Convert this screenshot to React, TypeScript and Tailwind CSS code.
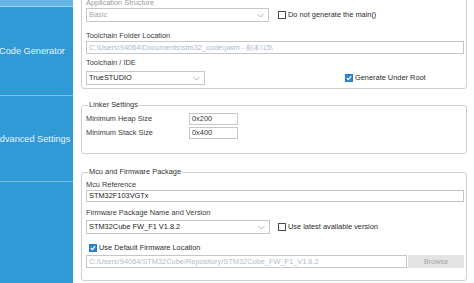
import React from "react";

const Chevron = () => (
  <svg width="7" height="5" viewBox="0 0 7 5" className="shrink-0">
    <polyline points="0.5,1 3.5,4 6.5,1" fill="none" stroke="#a8a8a8" strokeWidth="0.9" />
  </svg>
);

const Box = ({ checked }: { checked?: boolean }) =>
  checked ? (
    <div className="w-[8px] h-[8px] bg-[#2f86d4] border border-[#2a78c0] flex items-center justify-center shrink-0">
      <svg width="6" height="6" viewBox="0 0 6 6">
        <polyline points="0.8,3 2.4,4.6 5.2,1.2" fill="none" stroke="#ffffff" strokeWidth="1.1" />
      </svg>
    </div>
  ) : (
    <div className="w-[8px] h-[8px] bg-white border border-[#4a4a4a] shrink-0" />
  );

const Select = ({ text, w, light }: { text: string; w: string; light?: boolean }) => (
  <div className={`${w} h-[14px] border border-[#c6c6c6] bg-white flex items-center justify-between pl-[2px] pr-[4px]`}>
    <span className={light ? "text-[#a6a6a6]" : "text-[#222]"}>{text}</span>
    <Chevron />
  </div>
);

export default function App() {
  return (
    <div className="w-[474px] h-[283px] overflow-hidden bg-white flex font-['Liberation_Sans',Arial,sans-serif] text-[7.4px] leading-[10px] text-[#3a3a3a]">
      {/* sidebar */}
      <div className="w-[73px] shrink-0 bg-[#2f9ad6] flex flex-col overflow-hidden text-white text-[9.2px]">
        <div className="h-[6px] bg-[#64b5e4]" />
        <div className="h-[1px] bg-[#9fd0ee]" />
        <div className="h-[88px] flex items-center overflow-hidden">
          <div className="w-[84px] ml-[-10px] shrink-0 text-center text-[#e8f4fc] whitespace-nowrap">Code Generator</div>
        </div>
        <div className="h-[1px] bg-[#7cc0e8]" />
        <div className="h-[85px] flex items-center overflow-hidden">
          <div className="w-[84px] ml-[-10px] shrink-0 text-center text-[#e8f4fc] whitespace-nowrap">Advanced Settings</div>
        </div>
        <div className="h-[1px] bg-[#7cc0e8]" />
        <div className="flex-1" />
      </div>

      {/* main */}
      <div className="flex-1 flex flex-col pl-[8px] pr-[8px]">
        {/* Project settings group (cut at top) */}
        <div className="mt-[-12px] h-[101px] border border-[#cfcfcf] rounded-[3px] pl-[4px] pr-[2px] flex flex-col">
          <div className="mt-[9px] h-[10px] text-[#9a9a9a]">Application Structure</div>
          <div className="h-[14px] flex items-center">
            <Select text="Basic" w="w-[183px]" light />
            <div className="ml-[9px] flex items-center gap-[2px]">
              <Box />
              <span className="text-[#2a2a2a]">Do not generate the main()</span>
            </div>
          </div>
          <div className="mt-[9px] h-[10px]">Toolchain Folder Location</div>
          <div className="h-[13px] border border-[#c6c6c6] flex items-center pl-[2px] text-[#a9b8cf] whitespace-nowrap overflow-hidden">
            C:\Users\94064\Documents\stm32_code\pwm - 副本\15\
          </div>
          <div className="mt-[4px] h-[10px]">Toolchain / IDE</div>
          <div className="mt-[3px] h-[14px] flex items-center">
            <Select text="TrueSTUDIO" w="w-[119px]" />
            <div className="ml-[140px] flex items-center gap-[2px]">
              <Box checked />
              <span className="text-[#2a2a2a]">Generate Under Root</span>
            </div>
          </div>
        </div>

        {/* Linker Settings */}
        <fieldset className="mt-[11px] h-[54px] border border-[#cfcfcf] rounded-[3px] pl-[4px] pr-[2px]">
          <legend className="ml-[2px] px-[1px] h-[10px] leading-[10px] text-[#333]">Linker Settings</legend>
          <div className="mt-[3px] flex flex-col gap-[2px]">
            <div className="h-[12px] flex items-center">
              <span className="w-[103px]">Minimum Heap Size</span>
              <div className="w-[49px] h-[12px] border border-[#c6c6c6] pl-[2px] flex items-center text-[#333]">0x200</div>
            </div>
            <div className="h-[12px] flex items-center">
              <span className="w-[103px]">Minimum Stack Size</span>
              <div className="w-[49px] h-[12px] border border-[#c6c6c6] pl-[2px] flex items-center text-[#333]">0x400</div>
            </div>
          </div>
        </fieldset>

        {/* Mcu and Firmware Package */}
        <fieldset className="mt-[13px] h-[114px] border border-[#cfcfcf] rounded-[3px] pl-[4px] pr-[2px]">
          <legend className="ml-[2px] px-[1px] h-[10px] leading-[10px] text-[#333]">Mcu and Firmware Package</legend>
          <div className="mt-[3px] h-[10px]">Mcu Reference</div>
          <div className="h-[12px] border border-[#c6c6c6] flex items-center pl-[2px] text-[#222]">STM32F103VGTx</div>
          <div className="mt-[6px] h-[10px]">Firmware Package Name and Version</div>
          <div className="mt-[2px] h-[14px] flex items-center">
            <Select text="STM32Cube FW_F1 V1.8.2" w="w-[184px]" />
            <div className="ml-[8px] flex items-center gap-[2px]">
              <Box />
              <span className="text-[#2a2a2a]">Use latest available version</span>
            </div>
          </div>
          <div className="mt-[9px] h-[10px] pl-[3px] flex items-center gap-[2px]">
            <Box checked />
            <span className="text-[#2a2a2a]">Use Default Firmware Location</span>
          </div>
          <div className="mt-[2px] h-[13px] flex">
            <div className="w-[321px] h-[13px] border border-[#c6c6c6] flex items-center pl-[2px] text-[#aebbd0] whitespace-nowrap overflow-hidden">
              C:/Users/94064/STM32Cube/Repository/STM32Cube_FW_F1_V1.8.2
            </div>
            <div className="ml-[1px] w-[56px] h-[13px] bg-[#e4e4e4] flex items-center justify-center text-[#a4a4a4]">Browse</div>
          </div>
        </fieldset>
      </div>
    </div>
  );
}
